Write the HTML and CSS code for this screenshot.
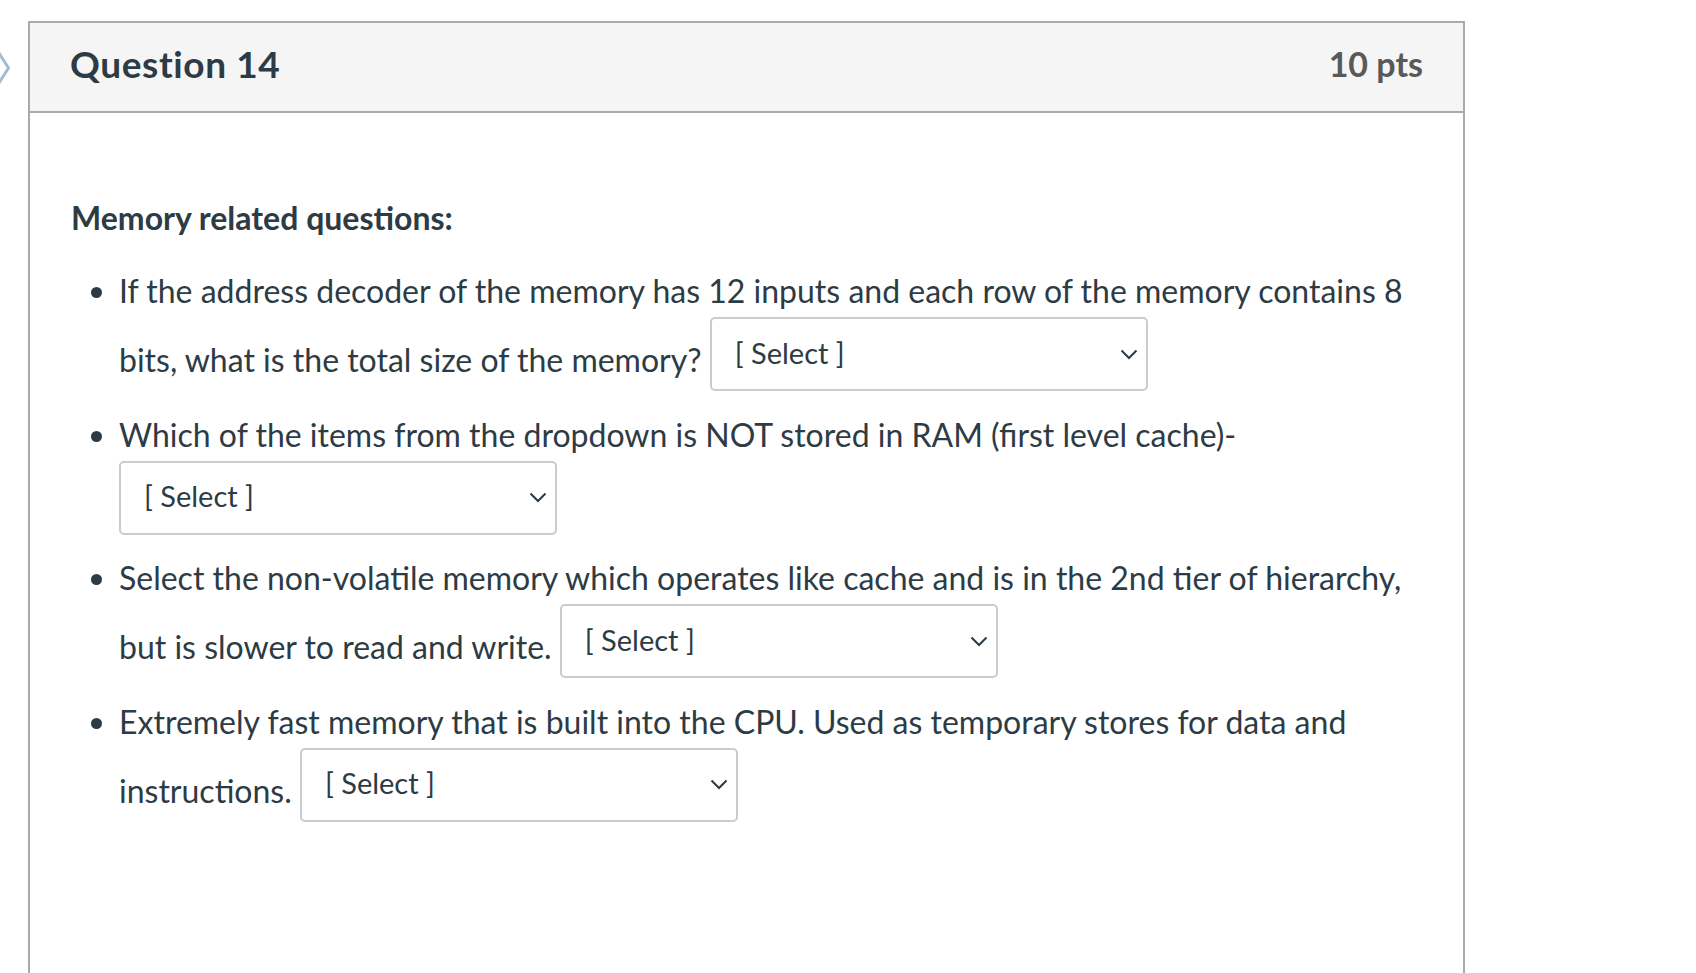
FILE: index.html
```html
<!DOCTYPE html>
<html lang="en">
<head>
<meta charset="utf-8">
<title>Question 14</title>
<link rel="stylesheet" href="styles.css">
</head>
<body>
<div class="page">
  <div class="gutter">
    <svg class="nav-chevron" width="14" height="40" viewBox="0 0 14 40" aria-hidden="true">
      <path d="M-3 2 L8.5 20 L-3 38" fill="none" stroke="#a3bccd" stroke-width="3" stroke-linejoin="miter"/>
    </svg>
  </div>
  <div class="card">
    <div class="card-header">
      <h2 class="q-title">Question 14</h2>
      <div class="q-points">10 pts</div>
    </div>
    <div class="card-body">
      <p class="lead">Memory related questions:</p>
      <ul class="q-list">
        <li>If the address decoder of the memory has 12 inputs and each row of the memory contains 8 bits, what is the total size of the memory? <span class="select"><span class="select-text">[ Select ]</span><svg class="chev" width="18" height="11" viewBox="0 0 18 11"><path d="M1.5 1.5 L9 9 L16.5 1.5" fill="none" stroke="#2d3b45" stroke-width="2"/></svg></span></li>
        <li>Which of the items from the dropdown is NOT stored in RAM (first level cache)- <span class="select"><span class="select-text">[ Select ]</span><svg class="chev" width="18" height="11" viewBox="0 0 18 11"><path d="M1.5 1.5 L9 9 L16.5 1.5" fill="none" stroke="#2d3b45" stroke-width="2"/></svg></span></li>
        <li>Select the non-volatile memory which operates like cache and is in the 2nd tier of hierarchy, but is slower to read and write. <span class="select"><span class="select-text">[ Select ]</span><svg class="chev" width="18" height="11" viewBox="0 0 18 11"><path d="M1.5 1.5 L9 9 L16.5 1.5" fill="none" stroke="#2d3b45" stroke-width="2"/></svg></span></li>
        <li>Extremely fast memory that is built into the CPU. Used as temporary stores for data and instructions. <span class="select"><span class="select-text">[ Select ]</span><svg class="chev" width="18" height="11" viewBox="0 0 18 11"><path d="M1.5 1.5 L9 9 L16.5 1.5" fill="none" stroke="#2d3b45" stroke-width="2"/></svg></span></li>
      </ul>
    </div>
  </div>
</div>
</body>
</html>
```
FILE: styles.css
```css
html, body {
  margin: 0;
  padding: 0;
  background: #ffffff;
  overflow: hidden;
}
body {
  font-family: Lato, "Open Sans", "Liberation Sans", sans-serif;
  color: #2d3b45;
}
.page {
  display: flex;
  align-items: flex-start;
  padding-top: 21px;
  height: 952px;
}
.gutter {
  width: 28px;
  flex: none;
  padding-top: 27px;
}
.nav-chevron {
  display: block;
}
.card {
  width: 1433px;
  min-height: 1000px;
  border: 2px solid #aaaaaa;
  border-bottom: none;
  flex: none;
}
.card-header {
  height: 88px;
  background: #f5f5f5;
  border-bottom: 2px solid #aaaaaa;
  display: flex;
  align-items: center;
  justify-content: space-between;
  padding: 0 40px 0 40px;
}
.q-title {
  margin: 0;
  font-size: 37px;
  font-weight: 700;
  letter-spacing: 0.6px;
  color: #2d3b45;
  padding-bottom: 7px;
}
.q-points {
  font-size: 34px;
  font-weight: 700;
  color: #595959;
  padding-bottom: 7px;
}
.card-body {
  padding: 82px 40px 0 41px;
  font-size: 32px;
  line-height: 45px;
}
.lead {
  margin: 0 0 28px 0;
  font-weight: 700;
  font-size: 32px;
}
.q-list {
  margin: 0;
  padding-left: 48px;
}
.q-list li {
  margin: 0;
}
.select {
  display: inline-flex;
  align-items: center;
  justify-content: space-between;
  box-sizing: border-box;
  width: 438px;
  height: 74px;
  border: 2px solid #c8cccf;
  border-radius: 5px;
  padding: 0 8px 3px 23px;
  margin: 4px 0 20.5px 0;
  vertical-align: 8px;
  background: #ffffff;
  font-size: 29px;
  line-height: 36px;
}
.select-text {
  color: #2d3b45;
}
.chev {
  display: block;
  margin-top: 3px;
}
```
